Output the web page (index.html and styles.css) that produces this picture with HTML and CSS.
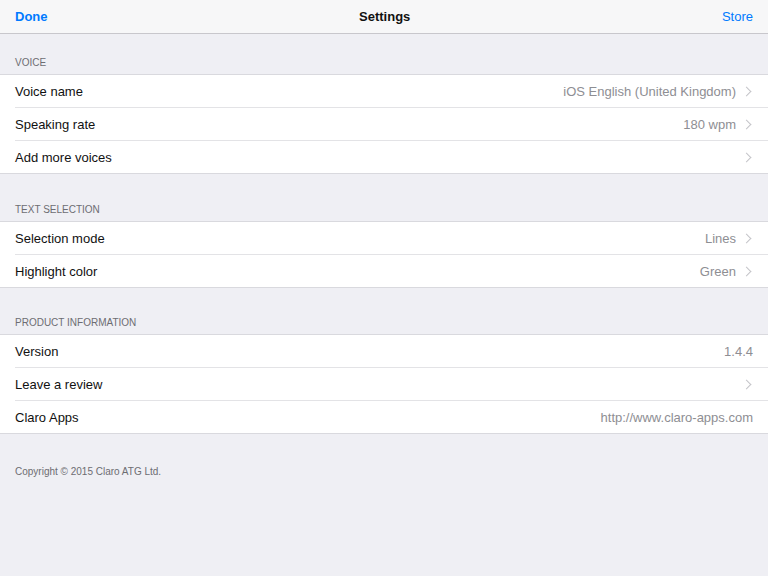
FILE: index.html
```html
<!DOCTYPE html>
<html lang="en">

<head>
  <meta charset="UTF-8" />
  <meta name="viewport" content="width=device-width, initial-scale=1.0" />
  <title>Settings</title>
  <link rel="stylesheet" href="styles.css">
</head>

<body>
  <!-- 顶部导航 -->
  <div class="navbar">
    <a class="nav-btn">Done</a>
    <span class="nav-title">Settings</span>
    <a class="nav-btn">Store</a>
  </div>

  <div class="section first">
    <p class="sec-head">VOICE</p>
    <ul class="group">
      <li><span class="label">Voice name</span><span class="value">iOS English (United Kingdom)</span><i class="chev"></i></li>
      <li><span class="label">Speaking rate</span><span class="value">180 wpm</span><i class="chev"></i></li>
      <li><span class="label">Add more voices</span><span class="value"></span><i class="chev"></i></li>
    </ul>
  </div>

  <div class="section">
    <p class="sec-head">TEXT SELECTION</p>
    <ul class="group">
      <li><span class="label">Selection mode</span><span class="value">Lines</span><i class="chev"></i></li>
      <li><span class="label">Highlight color</span><span class="value">Green</span><i class="chev"></i></li>
    </ul>
  </div>

  <div class="section last">
    <p class="sec-head">PRODUCT INFORMATION</p>
    <ul class="group">
      <li><span class="label">Version</span><span class="value">1.4.4</span></li>
      <li><span class="label">Leave a review</span><span class="value"></span><i class="chev"></i></li>
      <li><span class="label">Claro Apps</span><span class="value">http://www.claro-apps.com</span></li>
    </ul>
  </div>

  <p class="copyright">Copyright © 2015 Claro ATG Ltd.</p>
</body>

</html>
```

FILE: styles.css
```css
* {
  margin: 0;
  padding: 0;
}

ul {
  list-style: none;
}

body {
  background: #efeff4;
  font-family: "Liberation Sans", Arial, sans-serif;
  font-size: 13px;
  color: #111;
  height: 576px;
  overflow: hidden;
}

.navbar {
  height: 33px;
  background: #f7f7f8;
  border-bottom: 1px solid #c8c7cc;
  display: flex;
  align-items: center;
  justify-content: space-between;
  padding: 0 15px;
}

.nav-btn {
  color: #007aff;
  font-size: 13px;
  font-weight: bold;
}

.nav-btn:last-child {
  font-weight: normal;
}

.nav-title {
  font-weight: bold;
  font-size: 13px;
}

.section {
  margin-top: 30px;
}

.section.first {
  margin-top: 23px;
}

.section.last {
  margin-top: 29px;
}

.sec-head {
  padding: 0 15px 5px;
  line-height: 12px;
  font-size: 10px;
  color: #6d6d72;
}

.group {
  background: #fff;
  border-top: 1px solid #d9d9de;
  border-bottom: 1px solid #d9d9de;
}

.group li {
  margin-left: 15px;
  padding-right: 15px;
  height: 32px;
  display: flex;
  align-items: center;
  border-bottom: 1px solid #e3e3e6;
}

.group li:last-child {
  border-bottom: none;
}

.group li .label {
  flex: 1;
}

.group li .value {
  color: #8e8e93;
}

.group li .chev {
  width: 6px;
  height: 6px;
  border-top: 1px solid #c4c4c9;
  border-right: 1px solid #c4c4c9;
  transform: rotate(45deg);
  margin-left: 7px;
  margin-right: 3px;
}

.copyright {
  padding: 32px 15px 0;
  font-size: 10px;
  color: #6d6d72;
}
```
